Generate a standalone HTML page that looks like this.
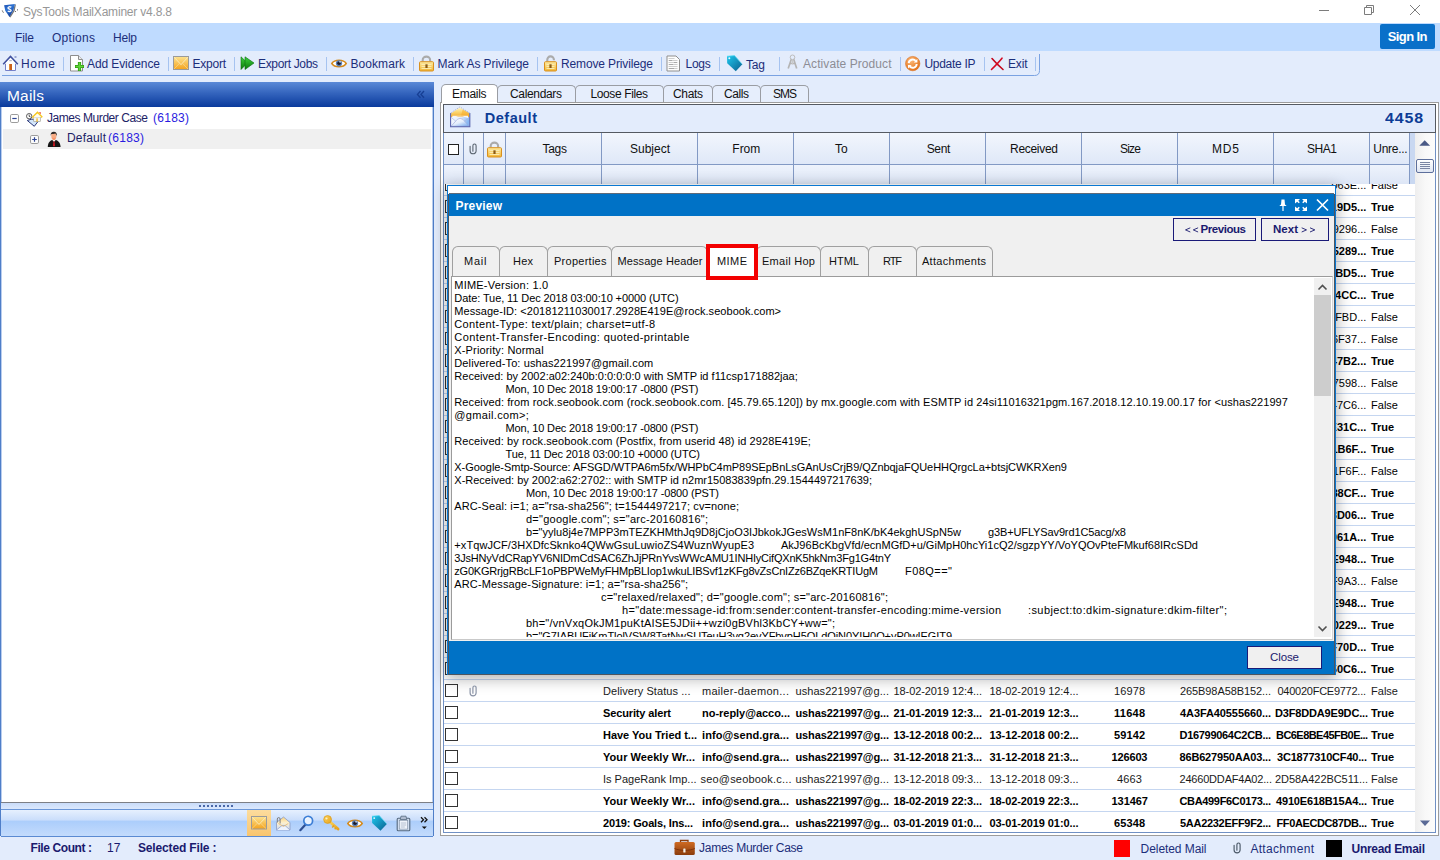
<!DOCTYPE html>
<html><head><meta charset="utf-8"><title>SysTools MailXaminer v4.8.8</title>
<style>

*{margin:0;padding:0;box-sizing:border-box}
html,body{width:1440px;height:860px;overflow:hidden;background:#e3ecfc;font-family:"Liberation Sans",sans-serif;}
.a{position:absolute}
.t{position:absolute;white-space:pre;font-family:"Liberation Sans",sans-serif;}
svg{position:absolute;overflow:visible}
.sep{position:absolute;top:56.5px;width:1px;height:14px;background:#a6c3f0}
.tab{position:absolute;border:1px solid #9a9da3;border-bottom:none;border-radius:5px 5px 0 0;background:#e6eefc}
.ptab{position:absolute;top:246px;height:31px;border:1px solid #a0a0a0;border-bottom:none;border-radius:6px 6px 0 0;background:#f0f0f0}
.hl{position:absolute;left:444px;width:971px;height:1px;background:#c5d6f0}
.cb{position:absolute;left:445px;width:13px;height:13px;border:1px solid #333;background:#fff}
.vl{position:absolute;top:133px;width:1px;height:51px;background:#8299c4}

</style></head><body>
<div class="a" style="left:0;top:0;width:1440px;height:23px;background:#fff"></div><span class="t" style="left:23.0px;top:3.5px;font-size:12px;line-height:16px;color:#979797;letter-spacing:-0.195px;">SysTools MailXaminer v4.8.8</span><svg style="left:1300px;top:0" width="140" height="23"><path d="M19 10.500h10" stroke="#7c7c7c" fill="none"/><path d="M64.500 7.500h7v7h-7z M66.500 7.500v-2h7v7h-2" stroke="#7c7c7c" fill="none"/><path d="M110 5l10 10M120 5l-10 10" stroke="#6e6e6e" stroke-width=".9" fill="none"/></svg><div class="a" style="left:0;top:23px;width:1440px;height:28px;background:#bfdbff"></div><span class="t" style="left:15.0px;top:29.8px;font-size:12px;line-height:16px;color:#1c2e7a;letter-spacing:-0.115px;">File</span><span class="t" style="left:52.0px;top:29.8px;font-size:12px;line-height:16px;color:#1c2e7a;letter-spacing:0.273px;">Options</span><span class="t" style="left:113.0px;top:29.8px;font-size:12px;line-height:16px;color:#1c2e7a;letter-spacing:-0.229px;">Help</span><div class="a" style="left:1380px;top:24px;width:55px;height:25px;background:#0a70c9;border-radius:2px"></div><span class="t" style="left:1387.7px;top:28.2px;font-size:13px;line-height:17px;color:#fff;font-weight:bold;letter-spacing:-0.591px;">Sign In</span><svg style="left:0;top:51px" width="1045" height="28"><path d="M2 24.500H1034.500Q1039.500 24.500 1039.500 19.500V3" fill="none" stroke="#7aa2e2" stroke-width="1"/></svg><div class="sep" style="left:63px"></div><div class="sep" style="left:168px"></div><div class="sep" style="left:234px"></div><div class="sep" style="left:326px"></div><div class="sep" style="left:413px"></div><div class="sep" style="left:537px"></div><div class="sep" style="left:661px"></div><div class="sep" style="left:719px"></div><div class="sep" style="left:779px"></div><div class="sep" style="left:900px"></div><div class="sep" style="left:984px"></div><div class="sep" style="left:1035px"></div><span class="t" style="left:21.0px;top:55.5px;font-size:12px;line-height:16px;color:#1c2e7a;letter-spacing:0.661px;">Home</span><span class="t" style="left:87.0px;top:55.5px;font-size:12px;line-height:16px;color:#1c2e7a;letter-spacing:-0.097px;">Add Evidence</span><span class="t" style="left:192.5px;top:55.5px;font-size:12px;line-height:16px;color:#1c2e7a;letter-spacing:-0.237px;">Export</span><span class="t" style="left:258.0px;top:55.5px;font-size:12px;line-height:16px;color:#1c2e7a;letter-spacing:-0.338px;">Export Jobs</span><span class="t" style="left:350.5px;top:55.5px;font-size:12px;line-height:16px;color:#1c2e7a;letter-spacing:0.067px;">Bookmark</span><span class="t" style="left:437.5px;top:55.5px;font-size:12px;line-height:16px;color:#1c2e7a;letter-spacing:-0.075px;">Mark As Privilege</span><span class="t" style="left:561.0px;top:55.5px;font-size:12px;line-height:16px;color:#1c2e7a;letter-spacing:-0.136px;">Remove Privilege</span><span class="t" style="left:685.5px;top:55.5px;font-size:12px;line-height:16px;color:#1c2e7a;letter-spacing:-0.277px;">Logs</span><span class="t" style="left:746.0px;top:56.5px;font-size:12px;line-height:16px;color:#1c2e7a;letter-spacing:-0.180px;">Tag</span><span class="t" style="left:924.5px;top:55.5px;font-size:12px;line-height:16px;color:#1c2e7a;letter-spacing:-0.297px;">Update IP</span><span class="t" style="left:1008.0px;top:55.5px;font-size:12px;line-height:16px;color:#1c2e7a;letter-spacing:-0.172px;">Exit</span><span class="t" style="left:803.0px;top:55.5px;font-size:12px;line-height:16px;color:#8d8d95;letter-spacing:0.075px;">Activate Product</span><div class="a" style="left:0;top:82px;width:434px;height:754px;background:#fff;border-left:1px solid #4f7ec8;border-right:1px solid #4f7ec8;box-shadow:inset 1px 0 0 #b9cdee,inset -1px 0 0 #b9cdee"></div><div class="a" style="left:0;top:82px;width:434px;height:25px;background:linear-gradient(#5a89d7,#3464bd 45%,#0a3a9c)"></div><span class="t" style="left:7.0px;top:86.0px;font-size:15.5px;line-height:19.5px;color:#fff;letter-spacing:0.207px;">Mails</span><svg style="left:416px;top:90px" width="10" height="9"><path d="M4.500 1L1.500 4.400 4.500 7.800M8 1L5 4.400 8 7.800" stroke="#173f94" stroke-width="1.400" fill="none"/></svg><div class="a" style="left:3px;top:129px;width:428px;height:20px;background:#f0f0f0"></div><svg style="left:9px;top:113px" width="12" height="12"><rect x="1.500" y="1.500" width="8" height="8" rx="1.300" fill="#fff" stroke="#9c9c9c"/><path d="M3.300 5.500h4.400" stroke="#2c4494" stroke-width="1.200"/></svg><svg style="left:29px;top:134px" width="12" height="12"><rect x="1.500" y="1.500" width="8" height="8" rx="1.300" fill="#fcfcfc" stroke="#9c9c9c"/><path d="M3.200 5.500h4.600M5.500 3.200v4.600" stroke="#2c4494" stroke-width="1.200"/></svg><span class="t" style="left:47.0px;top:110.0px;font-size:12px;line-height:16px;color:#1c2266;letter-spacing:-0.440px;">James Murder Case</span><span class="t" style="left:153.0px;top:110.0px;font-size:12px;line-height:16px;color:#2a1be0;letter-spacing:0.263px;">(6183)</span><span class="t" style="left:67.0px;top:130.0px;font-size:12px;line-height:16px;color:#1c2266;letter-spacing:0.161px;">Default</span><span class="t" style="left:108.0px;top:130.0px;font-size:12px;line-height:16px;color:#2a1be0;letter-spacing:0.263px;">(6183)</span><div class="a" style="left:1px;top:802px;width:432px;height:7px;background:linear-gradient(#c9dcfa,#dbe8fd);border-top:1px solid #7c7f86"></div><div class="a" style="left:199px;top:805px;width:35px;height:2px;background:repeating-linear-gradient(90deg,#4a68a8 0 2px,transparent 2px 4px)"></div><div class="a" style="left:1px;top:808.500px;width:432px;height:28.500px;background:linear-gradient(#e6f0fe 0,#c9ddfb 40%,#abcdfb 41%,#c3dbfc 100%);border-top:1px solid #6a96d8;border-bottom:1px solid #5a8ad2"></div><div class="a" style="left:247px;top:810px;width:24px;height:26px;background:linear-gradient(#fcdc9e,#f9c56e)"></div><span class="t" style="left:30.5px;top:840.0px;font-size:12px;line-height:16px;color:#1a1a6e;font-weight:bold;letter-spacing:-0.409px;">File Count :</span><span class="t" style="left:107.0px;top:840.0px;font-size:12px;line-height:16px;color:#1a1a6e;">17</span><span class="t" style="left:138.0px;top:840.0px;font-size:12px;line-height:16px;color:#1a1a6e;font-weight:bold;letter-spacing:-0.157px;">Selected File :</span><span class="t" style="left:699.0px;top:840.0px;font-size:12px;line-height:16px;color:#1c2e7a;letter-spacing:-0.253px;">James Murder Case</span><div class="a" style="left:1114px;top:840px;width:16px;height:17px;background:#f00"></div><span class="t" style="left:1140.6px;top:840.9px;font-size:12px;line-height:16px;color:#1c2e7a;letter-spacing:-0.073px;">Deleted Mail</span><span class="t" style="left:1250.4px;top:840.9px;font-size:12px;line-height:16px;color:#1c2e7a;letter-spacing:0.322px;">Attachment</span><div class="a" style="left:1326px;top:840px;width:16px;height:17px;background:#000"></div><span class="t" style="left:1351.5px;top:840.9px;font-size:12px;line-height:16px;color:#1a1a6e;font-weight:bold;letter-spacing:-0.291px;">Unread Email</span><div class="tab" style="left:760px;top:85px;width:49px;height:18px;background:#e6eefc"></div><div class="tab" style="left:712px;top:85px;width:49px;height:18px;background:#e6eefc"></div><div class="tab" style="left:663px;top:85px;width:50px;height:18px;background:#e6eefc"></div><div class="tab" style="left:575px;top:85px;width:89px;height:18px;background:#e6eefc"></div><div class="tab" style="left:497px;top:85px;width:79px;height:18px;background:#e6eefc"></div><div class="tab" style="left:441px;top:84px;width:57px;height:20px;background:#fff"></div><div class="a" style="left:440px;top:102px;width:999px;height:734px;border:1px solid #9c9c9c;background:#fff"></div><div class="a" style="left:443px;top:104px;width:993px;height:29px;border:1px solid #555a62;background:#e3ecfc"></div><div class="a" style="left:442px;top:100px;width:55px;height:4px;background:#fff"></div><span class="t" style="left:452.0px;top:86.0px;font-size:12px;line-height:16px;color:#111;letter-spacing:-0.303px;">Emails</span><span class="t" style="left:510.0px;top:86.0px;font-size:12px;line-height:16px;color:#111;letter-spacing:-0.338px;">Calendars</span><span class="t" style="left:590.5px;top:86.0px;font-size:12px;line-height:16px;color:#111;letter-spacing:-0.388px;">Loose Files</span><span class="t" style="left:673.0px;top:86.0px;font-size:12px;line-height:16px;color:#111;letter-spacing:-0.340px;">Chats</span><span class="t" style="left:724.0px;top:86.0px;font-size:12px;line-height:16px;color:#111;letter-spacing:-0.418px;">Calls</span><span class="t" style="left:773.0px;top:86.0px;font-size:12px;line-height:16px;color:#111;letter-spacing:-1.008px;">SMS</span><span class="t" style="left:484.8px;top:108.8px;font-size:14.5px;line-height:18.5px;color:#0c3c96;font-weight:bold;letter-spacing:0.507px;">Default</span><span class="t" style="left:1385.0px;top:109.2px;font-size:14px;line-height:18px;color:#0c3c96;font-weight:bold;letter-spacing:0.767px;transform:scaleX(1.14);transform-origin:0 50%;">4458</span><div class="a" style="left:443px;top:133px;width:993px;height:700px;background:#fff;border:1px solid #7090c4;border-top:none"></div><div class="a" style="left:444px;top:133px;width:971px;height:32px;background:linear-gradient(#f2f6fd,#dfe8f8);border-bottom:1px solid #8299c4"></div><div class="a" style="left:444px;top:165px;width:971px;height:19px;background:linear-gradient(#eef3fc,#dde6f6)"></div><div class="a" style="left:1410px;top:133px;width:5px;height:51px;background:#c9d8f1"></div><div class="vl" style="left:463px"></div><div class="vl" style="left:483px"></div><div class="vl" style="left:505px"></div><div class="vl" style="left:601px"></div><div class="vl" style="left:697px"></div><div class="vl" style="left:793px"></div><div class="vl" style="left:889px"></div><div class="vl" style="left:985px"></div><div class="vl" style="left:1081px"></div><div class="vl" style="left:1177px"></div><div class="vl" style="left:1273px"></div><div class="vl" style="left:1369px"></div><div class="vl" style="left:1409px"></div><span class="t" style="left:542.5px;top:140.5px;font-size:12px;line-height:16px;color:#111;letter-spacing:-0.286px;">Tags</span><span class="t" style="left:630.0px;top:140.5px;font-size:12px;line-height:16px;color:#111;letter-spacing:-0.005px;">Subject</span><span class="t" style="left:732.3px;top:140.5px;font-size:12px;line-height:16px;color:#111;letter-spacing:0.000px;">From</span><span class="t" style="left:835.0px;top:140.5px;font-size:12px;line-height:16px;color:#111;">To</span><span class="t" style="left:926.7px;top:140.5px;font-size:12px;line-height:16px;color:#111;letter-spacing:-0.363px;">Sent</span><span class="t" style="left:1010.0px;top:140.5px;font-size:12px;line-height:16px;color:#111;letter-spacing:-0.290px;">Received</span><span class="t" style="left:1120.0px;top:140.5px;font-size:12px;line-height:16px;color:#111;letter-spacing:-0.781px;">Size</span><span class="t" style="left:1212.0px;top:140.5px;font-size:12px;line-height:16px;color:#111;letter-spacing:0.828px;">MD5</span><span class="t" style="left:1307.0px;top:140.5px;font-size:12px;line-height:16px;color:#111;letter-spacing:-0.453px;">SHA1</span><span class="t" style="left:1373.3px;top:140.5px;font-size:12px;line-height:16px;color:#111;letter-spacing:-0.269px;">Unre...</span><div class="a" style="left:448px;top:144px;width:10.500px;height:10.500px;border:1px solid #222;background:#fff"></div><div class="a" style="left:0;top:184px;width:1440px;height:648px;overflow:hidden"><div class="a" style="left:0;top:-184px;width:1440px;height:860px"><div class="hl" style="top:195px"></div><div class="cb" style="top:178px;width:2px;border-right:none"></div><span class="t" style="left:1331.4px;top:177.6px;font-size:11px;line-height:15px;color:#000;">063E...</span><span class="t" style="left:1371.0px;top:177.6px;font-size:11px;line-height:15px;color:#000;letter-spacing:0.023px;">False</span><div class="hl" style="top:217px"></div><div class="cb" style="top:200px"></div><span class="t" style="left:1330.8px;top:199.6px;font-size:11px;line-height:15px;color:#000;font-weight:bold;">19D5...</span><span class="t" style="left:1371.0px;top:199.6px;font-size:11px;line-height:15px;color:#000;font-weight:bold;letter-spacing:-0.078px;">True</span><div class="hl" style="top:239px"></div><div class="cb" style="top:222px"></div><span class="t" style="left:1332.7px;top:221.6px;font-size:11px;line-height:15px;color:#000;">9296...</span><span class="t" style="left:1371.0px;top:221.6px;font-size:11px;line-height:15px;color:#000;letter-spacing:0.023px;">False</span><div class="hl" style="top:261px"></div><div class="cb" style="top:244px"></div><span class="t" style="left:1332.7px;top:243.6px;font-size:11px;line-height:15px;color:#000;font-weight:bold;">5289...</span><span class="t" style="left:1371.0px;top:243.6px;font-size:11px;line-height:15px;color:#000;font-weight:bold;letter-spacing:-0.078px;">True</span><div class="hl" style="top:283px"></div><div class="cb" style="top:266px"></div><span class="t" style="left:1327.8px;top:265.6px;font-size:11px;line-height:15px;color:#000;font-weight:bold;">EBD5...</span><span class="t" style="left:1371.0px;top:265.6px;font-size:11px;line-height:15px;color:#000;font-weight:bold;letter-spacing:-0.078px;">True</span><div class="hl" style="top:305px"></div><div class="cb" style="top:288px"></div><span class="t" style="left:1329.0px;top:287.6px;font-size:11px;line-height:15px;color:#000;font-weight:bold;">04CC...</span><span class="t" style="left:1371.0px;top:287.6px;font-size:11px;line-height:15px;color:#000;font-weight:bold;letter-spacing:-0.078px;">True</span><div class="hl" style="top:327px"></div><div class="cb" style="top:310px"></div><span class="t" style="left:1327.8px;top:309.6px;font-size:11px;line-height:15px;color:#000;">EFBD...</span><span class="t" style="left:1371.0px;top:309.6px;font-size:11px;line-height:15px;color:#000;letter-spacing:0.023px;">False</span><div class="hl" style="top:349px"></div><div class="cb" style="top:332px"></div><span class="t" style="left:1332.0px;top:331.6px;font-size:11px;line-height:15px;color:#000;">6F37...</span><span class="t" style="left:1371.0px;top:331.6px;font-size:11px;line-height:15px;color:#000;letter-spacing:0.023px;">False</span><div class="hl" style="top:371px"></div><div class="cb" style="top:354px"></div><span class="t" style="left:1330.8px;top:353.6px;font-size:11px;line-height:15px;color:#000;font-weight:bold;">47B2...</span><span class="t" style="left:1371.0px;top:353.6px;font-size:11px;line-height:15px;color:#000;font-weight:bold;letter-spacing:-0.078px;">True</span><div class="hl" style="top:393px"></div><div class="cb" style="top:376px"></div><span class="t" style="left:1332.7px;top:375.6px;font-size:11px;line-height:15px;color:#000;">7598...</span><span class="t" style="left:1371.0px;top:375.6px;font-size:11px;line-height:15px;color:#000;letter-spacing:0.023px;">False</span><div class="hl" style="top:415px"></div><div class="cb" style="top:398px"></div><span class="t" style="left:1330.8px;top:397.6px;font-size:11px;line-height:15px;color:#000;">47C6...</span><span class="t" style="left:1371.0px;top:397.6px;font-size:11px;line-height:15px;color:#000;letter-spacing:0.023px;">False</span><div class="hl" style="top:437px"></div><div class="cb" style="top:420px"></div><span class="t" style="left:1329.6px;top:419.6px;font-size:11px;line-height:15px;color:#000;font-weight:bold;">E31C...</span><span class="t" style="left:1371.0px;top:419.6px;font-size:11px;line-height:15px;color:#000;font-weight:bold;letter-spacing:-0.078px;">True</span><div class="hl" style="top:459px"></div><div class="cb" style="top:442px"></div><span class="t" style="left:1331.4px;top:441.6px;font-size:11px;line-height:15px;color:#000;font-weight:bold;">1B6F...</span><span class="t" style="left:1371.0px;top:441.6px;font-size:11px;line-height:15px;color:#000;font-weight:bold;letter-spacing:-0.078px;">True</span><div class="hl" style="top:481px"></div><div class="cb" style="top:464px"></div><span class="t" style="left:1332.7px;top:463.6px;font-size:11px;line-height:15px;color:#000;">1F6F...</span><span class="t" style="left:1371.0px;top:463.6px;font-size:11px;line-height:15px;color:#000;letter-spacing:0.023px;">False</span><div class="hl" style="top:503px"></div><div class="cb" style="top:486px"></div><span class="t" style="left:1331.4px;top:485.6px;font-size:11px;line-height:15px;color:#000;font-weight:bold;">88CF...</span><span class="t" style="left:1371.0px;top:485.6px;font-size:11px;line-height:15px;color:#000;font-weight:bold;letter-spacing:-0.078px;">True</span><div class="hl" style="top:525px"></div><div class="cb" style="top:508px"></div><span class="t" style="left:1330.8px;top:507.6px;font-size:11px;line-height:15px;color:#000;font-weight:bold;">3D06...</span><span class="t" style="left:1371.0px;top:507.6px;font-size:11px;line-height:15px;color:#000;font-weight:bold;letter-spacing:-0.078px;">True</span><div class="hl" style="top:547px"></div><div class="cb" style="top:530px"></div><span class="t" style="left:1330.8px;top:529.6px;font-size:11px;line-height:15px;color:#000;font-weight:bold;">061A...</span><span class="t" style="left:1371.0px;top:529.6px;font-size:11px;line-height:15px;color:#000;font-weight:bold;letter-spacing:-0.078px;">True</span><div class="hl" style="top:569px"></div><div class="cb" style="top:552px"></div><span class="t" style="left:1331.4px;top:551.6px;font-size:11px;line-height:15px;color:#000;font-weight:bold;">E948...</span><span class="t" style="left:1371.0px;top:551.6px;font-size:11px;line-height:15px;color:#000;font-weight:bold;letter-spacing:-0.078px;">True</span><div class="hl" style="top:591px"></div><div class="cb" style="top:574px"></div><span class="t" style="left:1330.8px;top:573.6px;font-size:11px;line-height:15px;color:#000;">F9A3...</span><span class="t" style="left:1371.0px;top:573.6px;font-size:11px;line-height:15px;color:#000;letter-spacing:0.023px;">False</span><div class="hl" style="top:613px"></div><div class="cb" style="top:596px"></div><span class="t" style="left:1331.4px;top:595.6px;font-size:11px;line-height:15px;color:#000;font-weight:bold;">E948...</span><span class="t" style="left:1371.0px;top:595.6px;font-size:11px;line-height:15px;color:#000;font-weight:bold;letter-spacing:-0.078px;">True</span><div class="hl" style="top:635px"></div><div class="cb" style="top:618px"></div><span class="t" style="left:1332.7px;top:617.6px;font-size:11px;line-height:15px;color:#000;font-weight:bold;">0229...</span><span class="t" style="left:1371.0px;top:617.6px;font-size:11px;line-height:15px;color:#000;font-weight:bold;letter-spacing:-0.078px;">True</span><div class="hl" style="top:657px"></div><div class="cb" style="top:640px"></div><span class="t" style="left:1330.2px;top:639.6px;font-size:11px;line-height:15px;color:#000;font-weight:bold;">F70D...</span><span class="t" style="left:1371.0px;top:639.6px;font-size:11px;line-height:15px;color:#000;font-weight:bold;letter-spacing:-0.078px;">True</span><div class="hl" style="top:679px"></div><div class="cb" style="top:662px"></div><span class="t" style="left:1330.8px;top:661.6px;font-size:11px;line-height:15px;color:#000;font-weight:bold;">50C6...</span><span class="t" style="left:1371.0px;top:661.6px;font-size:11px;line-height:15px;color:#000;font-weight:bold;letter-spacing:-0.078px;">True</span><div class="hl" style="top:701px"></div><div class="cb" style="top:684px"></div><span class="t" style="left:603.0px;top:683.6px;font-size:11px;line-height:15px;color:#1a1a1a;letter-spacing:0.072px;">Delivery Status ...</span><span class="t" style="left:702.0px;top:683.6px;font-size:11px;line-height:15px;color:#1a1a1a;letter-spacing:0.297px;">mailer-daemon...</span><span class="t" style="left:795.5px;top:683.6px;font-size:11px;line-height:15px;color:#1a1a1a;letter-spacing:0.066px;">ushas221997@g...</span><span class="t" style="left:893.5px;top:683.6px;font-size:11px;line-height:15px;color:#1a1a1a;letter-spacing:-0.083px;">18-02-2019 12:4...</span><span class="t" style="left:989.5px;top:683.6px;font-size:11px;line-height:15px;color:#1a1a1a;letter-spacing:-0.053px;">18-02-2019 12:4...</span><span class="t" style="left:1114.0px;top:683.6px;font-size:11px;line-height:15px;color:#1a1a1a;letter-spacing:0.102px;">16978</span><span class="t" style="left:1180.0px;top:683.6px;font-size:11px;line-height:15px;color:#1a1a1a;letter-spacing:-0.091px;">265B98A58B152...</span><span class="t" style="left:1277.5px;top:683.6px;font-size:11px;line-height:15px;color:#1a1a1a;letter-spacing:-0.257px;">040020FCE9772...</span><span class="t" style="left:1371.0px;top:683.6px;font-size:11px;line-height:15px;color:#1a1a1a;letter-spacing:0.023px;">False</span><div class="hl" style="top:723px"></div><div class="cb" style="top:706px"></div><span class="t" style="left:603.0px;top:705.6px;font-size:11px;line-height:15px;color:#000;font-weight:bold;letter-spacing:-0.131px;">Security alert</span><span class="t" style="left:702.0px;top:705.6px;font-size:11px;line-height:15px;color:#000;font-weight:bold;letter-spacing:-0.025px;">no-reply@acco...</span><span class="t" style="left:795.5px;top:705.6px;font-size:11px;line-height:15px;color:#000;font-weight:bold;letter-spacing:-0.108px;">ushas221997@g...</span><span class="t" style="left:893.5px;top:705.6px;font-size:11px;line-height:15px;color:#000;font-weight:bold;letter-spacing:-0.119px;">21-01-2019 12:3...</span><span class="t" style="left:989.5px;top:705.6px;font-size:11px;line-height:15px;color:#000;font-weight:bold;letter-spacing:-0.089px;">21-01-2019 12:3...</span><span class="t" style="left:1114.0px;top:705.6px;font-size:11px;line-height:15px;color:#000;font-weight:bold;letter-spacing:0.254px;">11648</span><span class="t" style="left:1180.0px;top:705.6px;font-size:11px;line-height:15px;color:#000;font-weight:bold;letter-spacing:-0.091px;">4A3FA40555660...</span><span class="t" style="left:1275.0px;top:705.6px;font-size:11px;line-height:15px;color:#000;font-weight:bold;letter-spacing:-0.169px;">D3F8DDA9E9DC...</span><span class="t" style="left:1371.0px;top:705.6px;font-size:11px;line-height:15px;color:#000;font-weight:bold;letter-spacing:-0.078px;">True</span><div class="hl" style="top:745px"></div><div class="cb" style="top:728px"></div><span class="t" style="left:603.0px;top:727.6px;font-size:11px;line-height:15px;color:#000;font-weight:bold;letter-spacing:-0.019px;">Have You Tried t...</span><span class="t" style="left:702.0px;top:727.6px;font-size:11px;line-height:15px;color:#000;font-weight:bold;letter-spacing:0.073px;">info@send.gra...</span><span class="t" style="left:795.5px;top:727.6px;font-size:11px;line-height:15px;color:#000;font-weight:bold;letter-spacing:-0.108px;">ushas221997@g...</span><span class="t" style="left:893.5px;top:727.6px;font-size:11px;line-height:15px;color:#000;font-weight:bold;letter-spacing:-0.119px;">13-12-2018 00:2...</span><span class="t" style="left:989.5px;top:727.6px;font-size:11px;line-height:15px;color:#000;font-weight:bold;letter-spacing:-0.089px;">13-12-2018 00:2...</span><span class="t" style="left:1114.0px;top:727.6px;font-size:11px;line-height:15px;color:#000;font-weight:bold;letter-spacing:0.102px;">59142</span><span class="t" style="left:1179.5px;top:727.6px;font-size:11px;line-height:15px;color:#000;font-weight:bold;letter-spacing:-0.301px;">D16799064C2CB...</span><span class="t" style="left:1276.0px;top:727.6px;font-size:11px;line-height:15px;color:#000;font-weight:bold;letter-spacing:-0.551px;">BC6E8BE45FB0E...</span><span class="t" style="left:1371.0px;top:727.6px;font-size:11px;line-height:15px;color:#000;font-weight:bold;letter-spacing:-0.078px;">True</span><div class="hl" style="top:767px"></div><div class="cb" style="top:750px"></div><span class="t" style="left:603.0px;top:749.6px;font-size:11px;line-height:15px;color:#000;font-weight:bold;letter-spacing:0.057px;">Your Weekly Wr...</span><span class="t" style="left:702.0px;top:749.6px;font-size:11px;line-height:15px;color:#000;font-weight:bold;letter-spacing:0.073px;">info@send.gra...</span><span class="t" style="left:795.5px;top:749.6px;font-size:11px;line-height:15px;color:#000;font-weight:bold;letter-spacing:-0.108px;">ushas221997@g...</span><span class="t" style="left:893.5px;top:749.6px;font-size:11px;line-height:15px;color:#000;font-weight:bold;letter-spacing:-0.119px;">31-12-2018 21:3...</span><span class="t" style="left:989.5px;top:749.6px;font-size:11px;line-height:15px;color:#000;font-weight:bold;letter-spacing:-0.089px;">31-12-2018 21:3...</span><span class="t" style="left:1111.5px;top:749.6px;font-size:11px;line-height:15px;color:#000;font-weight:bold;letter-spacing:-0.144px;">126603</span><span class="t" style="left:1179.5px;top:749.6px;font-size:11px;line-height:15px;color:#000;font-weight:bold;letter-spacing:-0.179px;">86B627950AA03...</span><span class="t" style="left:1277.0px;top:749.6px;font-size:11px;line-height:15px;color:#000;font-weight:bold;letter-spacing:-0.197px;">3C1877310CF40...</span><span class="t" style="left:1371.0px;top:749.6px;font-size:11px;line-height:15px;color:#000;font-weight:bold;letter-spacing:-0.078px;">True</span><div class="hl" style="top:789px"></div><div class="cb" style="top:772px"></div><span class="t" style="left:603.0px;top:771.6px;font-size:11px;line-height:15px;color:#1a1a1a;letter-spacing:-0.003px;">Is PageRank Imp...</span><span class="t" style="left:700.5px;top:771.6px;font-size:11px;line-height:15px;color:#1a1a1a;letter-spacing:0.185px;">seo@seobook.c...</span><span class="t" style="left:795.5px;top:771.6px;font-size:11px;line-height:15px;color:#1a1a1a;letter-spacing:0.066px;">ushas221997@g...</span><span class="t" style="left:893.5px;top:771.6px;font-size:11px;line-height:15px;color:#1a1a1a;letter-spacing:-0.083px;">13-12-2018 09:3...</span><span class="t" style="left:989.5px;top:771.6px;font-size:11px;line-height:15px;color:#1a1a1a;letter-spacing:-0.053px;">13-12-2018 09:3...</span><span class="t" style="left:1117.0px;top:771.6px;font-size:11px;line-height:15px;color:#1a1a1a;letter-spacing:0.172px;">4663</span><span class="t" style="left:1179.5px;top:771.6px;font-size:11px;line-height:15px;color:#1a1a1a;letter-spacing:-0.193px;">24660DDAF4A02...</span><span class="t" style="left:1275.0px;top:771.6px;font-size:11px;line-height:15px;color:#1a1a1a;letter-spacing:-0.066px;">2D58A422BC511...</span><span class="t" style="left:1371.0px;top:771.6px;font-size:11px;line-height:15px;color:#1a1a1a;letter-spacing:0.023px;">False</span><div class="hl" style="top:811px"></div><div class="cb" style="top:794px"></div><span class="t" style="left:603.0px;top:793.6px;font-size:11px;line-height:15px;color:#000;font-weight:bold;letter-spacing:0.057px;">Your Weekly Wr...</span><span class="t" style="left:702.0px;top:793.6px;font-size:11px;line-height:15px;color:#000;font-weight:bold;letter-spacing:0.073px;">info@send.gra...</span><span class="t" style="left:795.5px;top:793.6px;font-size:11px;line-height:15px;color:#000;font-weight:bold;letter-spacing:-0.108px;">ushas221997@g...</span><span class="t" style="left:893.5px;top:793.6px;font-size:11px;line-height:15px;color:#000;font-weight:bold;letter-spacing:-0.119px;">18-02-2019 22:3...</span><span class="t" style="left:989.5px;top:793.6px;font-size:11px;line-height:15px;color:#000;font-weight:bold;letter-spacing:-0.089px;">18-02-2019 22:3...</span><span class="t" style="left:1111.5px;top:793.6px;font-size:11px;line-height:15px;color:#000;font-weight:bold;letter-spacing:-0.044px;">131467</span><span class="t" style="left:1179.5px;top:793.6px;font-size:11px;line-height:15px;color:#000;font-weight:bold;letter-spacing:-0.341px;">CBA499F6C0173...</span><span class="t" style="left:1276.0px;top:793.6px;font-size:11px;line-height:15px;color:#000;font-weight:bold;letter-spacing:-0.172px;">4910E618B15A4...</span><span class="t" style="left:1371.0px;top:793.6px;font-size:11px;line-height:15px;color:#000;font-weight:bold;letter-spacing:-0.078px;">True</span><div class="cb" style="top:816px"></div><span class="t" style="left:603.0px;top:815.6px;font-size:11px;line-height:15px;color:#000;font-weight:bold;letter-spacing:-0.163px;">2019: Goals, Ins...</span><span class="t" style="left:702.0px;top:815.6px;font-size:11px;line-height:15px;color:#000;font-weight:bold;letter-spacing:0.073px;">info@send.gra...</span><span class="t" style="left:795.5px;top:815.6px;font-size:11px;line-height:15px;color:#000;font-weight:bold;letter-spacing:-0.108px;">ushas221997@g...</span><span class="t" style="left:893.5px;top:815.6px;font-size:11px;line-height:15px;color:#000;font-weight:bold;letter-spacing:-0.119px;">03-01-2019 01:0...</span><span class="t" style="left:989.5px;top:815.6px;font-size:11px;line-height:15px;color:#000;font-weight:bold;letter-spacing:-0.089px;">03-01-2019 01:0...</span><span class="t" style="left:1114.0px;top:815.6px;font-size:11px;line-height:15px;color:#000;font-weight:bold;letter-spacing:0.102px;">65348</span><span class="t" style="left:1180.0px;top:815.6px;font-size:11px;line-height:15px;color:#000;font-weight:bold;letter-spacing:-0.292px;">5AA2232EFF9F2...</span><span class="t" style="left:1276.5px;top:815.6px;font-size:11px;line-height:15px;color:#000;font-weight:bold;letter-spacing:-0.391px;">FF0AECDC87DB...</span><span class="t" style="left:1371.0px;top:815.6px;font-size:11px;line-height:15px;color:#000;font-weight:bold;letter-spacing:-0.078px;">True</span></div></div><div class="a" style="left:1415px;top:133px;width:20px;height:699px;background:linear-gradient(90deg,#eeeeee,#f8f8f8 50%,#fcfcfc)"></div><div class="a" style="left:1416px;top:159px;width:18px;height:14px;border:1px solid #5d6f9c;border-radius:2px;background:linear-gradient(#fff,#dfe6f3)"></div><div class="a" style="left:1420px;top:162px;width:10px;height:1px;background:#7a86a3"></div><div class="a" style="left:1420px;top:164px;width:10px;height:1px;background:#7a86a3"></div><div class="a" style="left:1420px;top:166px;width:10px;height:1px;background:#7a86a3"></div><div class="a" style="left:1420px;top:168px;width:10px;height:1px;background:#7a86a3"></div><svg style="left:1415px;top:133px" width="20" height="701"><path d="M4.300 12.700l5.400-5.400 5.400 5.400z" fill="#4a5a86"/><path d="M5 687.5l5 5.5 5-5.5z" fill="#5a6a96"/></svg><div class="a" style="left:447px;top:184.500px;width:889px;height:490.500px;box-shadow:0 3px 14px 1px rgba(0,0,0,.30);background:#0072c6"></div><div class="a" style="left:447px;top:184.500px;width:889px;height:490.500px;background:#0a78d2"></div><div class="a" style="left:448px;top:186px;width:887px;height:488.500px;background:#f0f0f0;border:1px solid #4d555f;border-top:none"></div><div class="a" style="left:448px;top:185.600px;width:887px;height:8px;background:#fff"></div><div class="a" style="left:449px;top:193px;width:885px;height:23px;background:#0072c6;border-top:1px solid #5f6a78"></div><div class="a" style="left:449px;top:641px;width:885px;height:32.700px;background:#0072c6"></div><span class="t" style="left:455.5px;top:197.6px;font-size:12px;line-height:16px;color:#fff;font-weight:bold;letter-spacing:0.188px;">Preview</span><svg style="left:1275px;top:194px" width="60" height="22"><path d="M6.5 5.5h3l.5 5 1.7 1.6h-7.4l1.7-1.6z" fill="#fff"/><path d="M8 12v5" stroke="#fff" stroke-width="1.2"/><g fill="#fff"><path d="M20 5h5l-1.7 1.7 1.5 1.5-1.1 1.1-1.5-1.5L20 9.5z"/><path d="M32 5h-5l1.7 1.7-1.5 1.5 1.1 1.1 1.5-1.5L32 9.500z"/><path d="M20 17h5l-1.700-1.700 1.500-1.500-1.100-1.100-1.500 1.500L20 12.500z"/><path d="M32 17h-5l1.700-1.700-1.500-1.500 1.100-1.100 1.500 1.500L32 12.500z"/></g><path d="M42 5.500l11 11M53 5.500l-11 11" stroke="#fff" stroke-width="1.700" fill="none"/></svg><div class="a" style="left:1173px;top:218px;width:83px;height:23px;border:1px solid #1a1a78;background:#f0f0f0"></div><div class="a" style="left:1261px;top:218px;width:68px;height:23px;border:1px solid #1a1a78;background:#f0f0f0"></div><svg style="left:1184px;top:226px" width="16" height="8"><path d="M6.300 1.800L1.500 3.900 6.300 6M14.100 1.800L9.300 3.900 14.100 6" stroke="#1a1a6e" stroke-width=".9" fill="none"/></svg><span class="t" style="left:1200.6px;top:221.6px;font-size:11.5px;line-height:15.5px;color:#1a1a6e;font-weight:bold;letter-spacing:-0.454px;">Previous</span><span class="t" style="left:1273.0px;top:221.8px;font-size:11.5px;line-height:15.5px;color:#1a1a6e;font-weight:bold;letter-spacing:0.021px;">Next</span><svg style="left:1300px;top:226.400px" width="17" height="8"><path d="M1.700 1.800L6.500 3.900 1.700 6M10 1.800L14.800 3.900 10 6" stroke="#1a1a6e" stroke-width=".9" fill="none"/></svg><div class="ptab" style="left:452px;width:48px"></div><div class="ptab" style="left:499px;width:49px"></div><div class="ptab" style="left:547px;width:65px"></div><div class="ptab" style="left:611px;width:97px"></div><div class="ptab" style="left:707px;width:50px"></div><div class="ptab" style="left:756px;width:65px"></div><div class="ptab" style="left:820px;width:49px"></div><div class="ptab" style="left:868px;width:49px"></div><div class="ptab" style="left:916px;width:77px"></div><div class="a" style="left:451px;top:276px;width:882px;height:364px;background:#fff;border:1px solid #9b9b9b;border-right-color:#d5d5d5;border-bottom-color:#c9c9c9"></div><div class="a" style="left:706px;top:244px;width:52px;height:35.700px;background:#fff;border:4px solid #f30000"></div><span class="t" style="left:464.0px;top:253.5px;font-size:11px;line-height:15px;color:#111;letter-spacing:0.776px;">Mail</span><span class="t" style="left:513.0px;top:253.5px;font-size:11px;line-height:15px;color:#111;letter-spacing:0.219px;">Hex</span><span class="t" style="left:554.0px;top:253.5px;font-size:11px;line-height:15px;color:#111;letter-spacing:0.262px;">Properties</span><span class="t" style="left:617.5px;top:253.5px;font-size:11px;line-height:15px;color:#111;letter-spacing:0.094px;">Message Header</span><span class="t" style="left:717.0px;top:253.5px;font-size:11px;line-height:15px;color:#111;letter-spacing:0.422px;">MIME</span><span class="t" style="left:762.0px;top:253.5px;font-size:11px;line-height:15px;color:#111;letter-spacing:0.281px;">Email Hop</span><span class="t" style="left:829.0px;top:253.5px;font-size:11px;line-height:15px;color:#111;letter-spacing:0.016px;">HTML</span><span class="t" style="left:883.0px;top:253.5px;font-size:11px;line-height:15px;color:#111;letter-spacing:-1.094px;">RTF</span><span class="t" style="left:922.0px;top:253.5px;font-size:11px;line-height:15px;color:#111;letter-spacing:0.286px;">Attachments</span><div class="a" style="left:1314px;top:278px;width:17px;height:359px;background:#f0f0f0"></div><div class="a" style="left:1314px;top:295px;width:17px;height:101px;background:#cdcdcd"></div><svg style="left:1314px;top:277px" width="17" height="362"><path d="M4.500 12.500l4-4 4 4" stroke="#505050" stroke-width="1.600" fill="none"/><path d="M4.500 349.500l4 4 4-4" stroke="#505050" stroke-width="1.600" fill="none"/></svg><div class="a" style="left:1247px;top:646px;width:75px;height:23px;border:1px solid #1a1a78;background:#f0f0f0"></div><span class="t" style="left:1270.0px;top:650.2px;font-size:11.5px;line-height:15.5px;color:#1a1a6e;letter-spacing:-0.102px;">Close</span><div class="a" style="left:453px;top:277px;width:861px;height:360px;overflow:hidden"><div class="a" style="left:-453px;top:-277px;width:1440px;height:860px"><span class="t" style="left:454.3px;top:279.0px;font-size:11px;line-height:13px;color:#000;letter-spacing:0.213px;">MIME-Version: 1.0</span><span class="t" style="left:454.3px;top:292.0px;font-size:11px;line-height:13px;color:#000;letter-spacing:-0.093px;">Date: Tue, 11 Dec 2018 03:00:10 +0000 (UTC)</span><span class="t" style="left:454.3px;top:305.0px;font-size:11px;line-height:13px;color:#000;letter-spacing:0.049px;">Message-ID: &lt;20181211030017.2928E419E@rock.seobook.com&gt;</span><span class="t" style="left:454.3px;top:318.0px;font-size:11px;line-height:13px;color:#000;letter-spacing:0.369px;">Content-Type: text/plain; charset=utf-8</span><span class="t" style="left:454.3px;top:331.0px;font-size:11px;line-height:13px;color:#000;letter-spacing:0.407px;">Content-Transfer-Encoding: quoted-printable</span><span class="t" style="left:454.3px;top:344.0px;font-size:11px;line-height:13px;color:#000;letter-spacing:0.147px;">X-Priority: Normal</span><span class="t" style="left:454.3px;top:357.0px;font-size:11px;line-height:13px;color:#000;letter-spacing:0.111px;">Delivered-To: ushas221997@gmail.com</span><span class="t" style="left:454.3px;top:370.0px;font-size:11px;line-height:13px;color:#000;letter-spacing:0.013px;">Received: by 2002:a02:240b:0:0:0:0:0 with SMTP id f11csp171882jaa;</span><span class="t" style="left:505.6px;top:383.0px;font-size:11px;line-height:13px;color:#000;letter-spacing:-0.162px;">Mon, 10 Dec 2018 19:00:17 -0800 (PST)</span><span class="t" style="left:454.3px;top:396.0px;font-size:11px;line-height:13px;color:#000;letter-spacing:0.094px;">Received: from rock.seobook.com (rock.seobook.com. [45.79.65.120]) by mx.google.com with ESMTP id 24si11016321pgm.167.2018.12.10.19.00.17 for &lt;ushas221997</span><span class="t" style="left:454.3px;top:409.0px;font-size:11px;line-height:13px;color:#000;letter-spacing:0.347px;">@gmail.com&gt;;</span><span class="t" style="left:505.6px;top:422.0px;font-size:11px;line-height:13px;color:#000;letter-spacing:-0.162px;">Mon, 10 Dec 2018 19:00:17 -0800 (PST)</span><span class="t" style="left:454.3px;top:435.0px;font-size:11px;line-height:13px;color:#000;letter-spacing:0.083px;">Received: by rock.seobook.com (Postfix, from userid 48) id 2928E419E;</span><span class="t" style="left:505.6px;top:448.0px;font-size:11px;line-height:13px;color:#000;letter-spacing:-0.129px;">Tue, 11 Dec 2018 03:00:10 +0000 (UTC)</span><span class="t" style="left:454.3px;top:461.0px;font-size:11px;line-height:13px;color:#000;letter-spacing:-0.050px;">X-Google-Smtp-Source: AFSGD/WTPA6m5fx/WHPbC4mP89SEpBnLsGAnUsCrjB9/QZnbqjaFQUeHHQrgcLa+btsjCWKRXen9</span><span class="t" style="left:454.3px;top:474.0px;font-size:11px;line-height:13px;color:#000;letter-spacing:-0.005px;">X-Received: by 2002:a62:2702:: with SMTP id n2mr15083839pfn.29.1544497217639;</span><span class="t" style="left:526.0px;top:487.0px;font-size:11px;line-height:13px;color:#000;letter-spacing:-0.159px;">Mon, 10 Dec 2018 19:00:17 -0800 (PST)</span><span class="t" style="left:454.3px;top:500.0px;font-size:11px;line-height:13px;color:#000;letter-spacing:0.103px;">ARC-Seal: i=1; a="rsa-sha256"; t=1544497217; cv=none;</span><span class="t" style="left:526.0px;top:513.0px;font-size:11px;line-height:13px;color:#000;letter-spacing:0.250px;">d="google.com"; s="arc-20160816";</span><span class="t" style="left:526.0px;top:526.0px;font-size:11px;line-height:13px;color:#000;letter-spacing:0.033px;">b="yylu8j4e7MPP3mTEZKHMthJq9D8jCjoO3IJbkokJGesWsM1nF8nK/bK4ekghUSpN5w</span><span class="t" style="left:988.0px;top:526.0px;font-size:11px;line-height:13px;color:#000;letter-spacing:-0.125px;">g3B+UFLYSav9rd1C5acg/x8</span><span class="t" style="left:454.3px;top:539.0px;font-size:11px;line-height:13px;color:#000;letter-spacing:0.087px;">+xTqwJCF/3HXDfcSknko4QWwGsuLuwioZS4WuznWyupE3</span><span class="t" style="left:781.0px;top:539.0px;font-size:11px;line-height:13px;color:#000;letter-spacing:0.011px;">AkJ96BcKbgVfd/ecnMGfD+u/GiMpH0hcYi1cQ2/sgzpYY/VoYQOvPteFMkuf68IRcSDd</span><span class="t" style="left:454.3px;top:552.0px;font-size:11px;line-height:13px;color:#000;letter-spacing:-0.197px;">3JsHNyVdCRapYV6NIDmCdSAC6ZhJjPRnYvsWWcAMU1INHIyCifQXnK5hkNm3Fg1G4tnY</span><span class="t" style="left:454.3px;top:565.0px;font-size:11px;line-height:13px;color:#000;letter-spacing:-0.203px;">zG0KGRrjgRBcLF1oPBPWeMyFHMpBLIop1wkuLIBSvf1zKFg8vZsCnIZz6BZqeKRTIUgM</span><span class="t" style="left:905.0px;top:565.0px;font-size:11px;line-height:13px;color:#000;letter-spacing:0.456px;">F08Q=="</span><span class="t" style="left:454.3px;top:578.0px;font-size:11px;line-height:13px;color:#000;letter-spacing:0.137px;">ARC-Message-Signature: i=1; a="rsa-sha256";</span><span class="t" style="left:601.0px;top:591.0px;font-size:11px;line-height:13px;color:#000;letter-spacing:0.225px;">c="relaxed/relaxed"; d="google.com"; s="arc-20160816";</span><span class="t" style="left:622.0px;top:604.0px;font-size:11px;line-height:13px;color:#000;letter-spacing:0.324px;">h="date:message-id:from:sender:content-transfer-encoding:mime-version</span><span class="t" style="left:1028.0px;top:604.0px;font-size:11px;line-height:13px;color:#000;letter-spacing:0.409px;">:subject:to:dkim-signature:dkim-filter";</span><span class="t" style="left:526.0px;top:617.0px;font-size:11px;line-height:13px;color:#000;letter-spacing:0.226px;">bh="/vnVxqOkJM1puKtAISE5JDii++wzi0gBVhl3KbCY+ww=";</span><span class="t" style="left:526.0px;top:630.0px;font-size:11px;line-height:13px;color:#000;letter-spacing:-0.078px;">b="G7IABUFiKmTlolVSW8TatNwSUTeuH3vq2evYFbvpH5OLdOiN0YIH0Q+yP0wIEGIT9</span></div></div><svg width="0" height="0" style="left:0;top:0"><defs><linearGradient id="gEnv" x1="0" y1="0" x2="0" y2="1"><stop offset="0" stop-color="#fde391"/><stop offset="1" stop-color="#f4a21c"/></linearGradient><linearGradient id="gLock" x1="0" y1="0" x2="0" y2="1"><stop offset="0" stop-color="#fdeaa0"/><stop offset="1" stop-color="#f2b534"/></linearGradient><linearGradient id="gTag" x1="0" y1="0" x2="1" y2="1"><stop offset="0" stop-color="#1fc8ee"/><stop offset="1" stop-color="#0a5f8e"/></linearGradient><linearGradient id="gGrn" x1="0" y1="0" x2="0" y2="1"><stop offset="0" stop-color="#3fd23f"/><stop offset="1" stop-color="#0a7a0a"/></linearGradient><radialGradient id="gOr" cx=".4" cy=".3" r=".8"><stop offset="0" stop-color="#fbb877"/><stop offset="1" stop-color="#df6a10"/></radialGradient><linearGradient id="gBag" x1="0" y1="0" x2="0" y2="1"><stop offset="0" stop-color="#cf6a22"/><stop offset="1" stop-color="#8a3c0c"/></linearGradient><linearGradient id="gKey" x1="0" y1="0" x2="1" y2="1"><stop offset="0" stop-color="#fbd35c"/><stop offset="1" stop-color="#e8a31e"/></linearGradient><linearGradient id="gFlap" x1="0" y1="0" x2="0" y2="1"><stop offset="0" stop-color="#fff7c8"/><stop offset=".45" stop-color="#fbd877"/><stop offset="1" stop-color="#f5ad2c"/></linearGradient><linearGradient id="gFold" x1="0" y1="0" x2=".8" y2="1"><stop offset="0" stop-color="#ffffff"/><stop offset=".55" stop-color="#e4eefc"/><stop offset="1" stop-color="#7fb0f0"/></linearGradient><linearGradient id="gBody" x1="0" y1="0" x2="1" y2=".6"><stop offset="0" stop-color="#ffffff"/><stop offset=".6" stop-color="#e6effc"/><stop offset="1" stop-color="#86b6f2"/></linearGradient><linearGradient id="gLogo" x1="0" y1="0" x2=".6" y2="1"><stop offset="0" stop-color="#1a4cae"/><stop offset=".45" stop-color="#2f74d4"/><stop offset="1" stop-color="#143c96"/></linearGradient><linearGradient id="gOpen" x1="0" y1="0" x2="0" y2="1"><stop offset="0" stop-color="#fbd37a"/><stop offset=".45" stop-color="#fdf0cf"/><stop offset="1" stop-color="#c9d9f7"/></linearGradient></defs></svg><svg style="left:0px;top:0px" width="22" height="22" viewBox="0 0 22 22"><path d="M15.300 4.300L14 10.800 9.900 17.200" fill="none" stroke="#3a3a3a" stroke-width="1.300" opacity=".7"/><path d="M4.100 5.200L14.900 4.100 13.300 10.600 9.500 16.900 5.300 10.800z" fill="url(#gLogo)"/><path d="M11.300 7.200c-1.600-.9-3.400-.4-3.300.7.100 1.300 3.100 1.100 3.100 2.600 0 1.100-1.900 1.400-3.400.5" stroke="#f4f6fa" stroke-width="1.350" fill="none"/><path d="M2.200 10.300l.8 2 .7.200" stroke="#555" stroke-width=".9" fill="none" opacity=".8"/><circle cx="15.500" cy="11.500" r=".55" fill="#555"/><path d="M17.500 9.200v1.300" stroke="#666" stroke-width=".9"/></svg><svg style="left:2px;top:54px" width="18" height="18" viewBox="0 0 18 18"><path d="M3.500 9.500v7h10v-7" fill="#fff" stroke="#7480c8" stroke-width="1"/><path d="M1.200 10.300L8.500 2.500l7.300 7.800" fill="none" stroke="#3f4f9e" stroke-width="1.600"/><path d="M3 9.800L8.500 4l5.500 5.800z" fill="#fff"/><rect x="7" y="10" width="3" height="6" fill="#c9601a"/><rect x="7" y="10" width="1" height="6" fill="#e08a3a"/><rect x="12.500" y="2.500" width="2" height="1" fill="#5060b0"/><rect x="7.300" y="6" width="2.500" height="1.200" fill="#b8b8c8"/></svg><svg style="left:69px;top:54px" width="17" height="18" viewBox="0 0 17 18"><path d="M1.500 1.500h8l4 4v11.500h-12z" fill="#fff" stroke="#8e8e8e" stroke-width="1"/><path d="M9.500 1.500v4h4" fill="#ececec" stroke="#8e8e8e" stroke-width="1"/><path d="M10.500 8v9M6 12.500h9" stroke="#2f9a12" stroke-width="3.200"/><path d="M10.500 8.600v7.800M6.600 12.500h7.800" stroke="#5fd43a" stroke-width="1.700"/></svg><svg style="left:173px;top:56px" width="16" height="14" viewBox="0 0 16 14"><rect x=".5" y=".5" width="15" height="13" fill="url(#gEnv)" stroke="#9a9a9a" stroke-width="1"/><path d="M1 1l7.0 7.700000000000001 7.0 -7.700000000000001" fill="none" stroke="#fbe9b5" stroke-width="1"/><path d="M1 13l5.76 -5.88M15 13l-5.76 -5.88" fill="none" stroke="#f8d58a" stroke-width=".8"/></svg><svg style="left:240px;top:56px" width="15" height="15" viewBox="0 0 15 15"><path d="M1 .8l6.500 6.200-6.500 6.500z" fill="url(#gGrn)" stroke="#0b6b0b" stroke-width=".6"/><path d="M5 .8l9 6.200-9 6.500z" fill="url(#gGrn)" stroke="#0b6b0b" stroke-width=".6"/></svg><svg style="left:331px;top:57.5px" width="16" height="11" viewBox="0 0 16 11"><path d="M.8 5.500C3.500 1.200 12.500 1.200 15.200 5.500 12.500 9.800 3.500 9.800.8 5.500z" fill="#fff" stroke="#d48a1c" stroke-width="1.500"/><circle cx="8" cy="5.300" r="3.100" fill="#5a7fb5"/><circle cx="8" cy="5.300" r="1.800" fill="#1b1b2a"/><rect x="8.300" y="3.200" width="1.500" height="1.300" fill="#e8eef8"/></svg><svg style="left:418.5px;top:54.5px" width="15" height="17" viewBox="0 0 15 17"><path d="M3.700 6.500V5a3.700 3.400 0 0 1 7.400 0V6.500" fill="none" stroke="#ababab" stroke-width="2.100"/><rect x=".5" y="6.700" width="14" height="9.300" rx="1" fill="url(#gLock)" stroke="#d9901e" stroke-width="1"/><path d="M2.500 9.500h10M2.500 11.500h10M2.500 13.500h10" stroke="#fbeeb8" stroke-width=".9"/><rect x="6.4" y="9.300" width="2.200" height="3.700" fill="#8a5a14"/></svg><svg style="left:543.5px;top:54.5px" width="15" height="17" viewBox="0 0 15 17"><path d="M3.300 6.500V4.800a3.300 3.300 0 0 1 6.600-.2V5.300" fill="none" stroke="#ababab" stroke-width="2.100"/><rect x=".5" y="6.700" width="12" height="9.300" rx="1" fill="url(#gLock)" stroke="#d9901e" stroke-width="1"/><path d="M2.500 9.500h8M2.500 11.500h8M2.500 13.500h8" stroke="#fbeeb8" stroke-width=".9"/><rect x="5.4" y="9.300" width="2.200" height="3.700" fill="#8a5a14"/></svg><svg style="left:665.5px;top:54.5px" width="15" height="17" viewBox="0 0 15 17"><path d="M1 1h9l3.500 3.500v11.500h-12.500z" fill="#fdfdfd" stroke="#8f8f8f" stroke-width="1"/><path d="M2.500 3.500h6M2.500 5.500h9M2.500 7.500h9M2.500 9.500h9M2.500 11.500h9M2.500 13.500h9" stroke="#cfcfcf" stroke-width="1.100"/><path d="M3 5.500h3M3 9.500h4M8 7.500h3M3 13.500h5" stroke="#a9a9a9" stroke-width="1.100"/></svg><svg style="left:725.5px;top:54.5px" width="17" height="17" viewBox="0 0 17 17"><g transform="scale(1.0)"><path d="M1 1.200L8.500.600 16.300 9.300 9.800 16.300 1.200 8.300z" fill="url(#gTag)"/><path d="M1 1.200L8.500.600 16.300 9.300" fill="none" stroke="#5fdcf5" stroke-width=".7"/><circle cx="3.300" cy="3.200" r="1" fill="#e8f8ff"/></g></svg><svg style="left:785.5px;top:54px" width="13" height="17" viewBox="0 0 13 17"><circle cx="6.500" cy="3.300" r="2.300" fill="none" stroke="#bdbdbd" stroke-width="1"/><path d="M5.300 5.300L2.200 14.500M4.300 8.500l1.300 1.500M7.700 5.300l3 9.200M8.700 8.500L7.300 10" stroke="#b4b4b4" stroke-width="1.700" fill="none"/><path d="M6.500 5.600v5" stroke="#c8c8c8" stroke-width="1.300"/></svg><svg style="left:905px;top:55.5px" width="15.5" height="15.5" viewBox="0 0 15.5 15.5"><circle cx="7.700" cy="7.600" r="7.200" fill="url(#gOr)" stroke="#d9660f" stroke-width=".5"/><path d="M3.700 7.200a4 4 0 0 1 7-2.300" fill="none" stroke="#fff" stroke-width="1.900"/><path d="M12.400 2.800v3.600h-3.600z" fill="#fff"/><path d="M11.700 8a4 4 0 0 1-7 2.400" fill="none" stroke="#fff" stroke-width="1.900"/><path d="M3 12.500V8.900h3.600z" fill="#fff"/></svg><svg style="left:990px;top:56.5px" width="15" height="14" viewBox="0 0 15 14"><path d="M2 1.500C5 5 9 9 13 12.500" stroke="#c4061a" stroke-width="1.600" fill="none" stroke-linecap="round"/><path d="M12 1.200C9 5 5 9 1.500 12.500" stroke="#d60a22" stroke-width="1.600" fill="none" stroke-linecap="round"/></svg><svg style="left:26px;top:111px" width="17" height="17" viewBox="0 0 17 17"><path d="M1.300 9.500l7 5.800 3.700-4.800-6-2.500z" fill="#d3e6fb" stroke="#2b3778" stroke-width="1"/><circle cx="3.200" cy="5.200" r="2.700" fill="#fff" stroke="#4a4a4a" stroke-width=".9"/><path d="M3.200 3.600v1.800l1.300.5" stroke="#222" stroke-width=".8" fill="none"/><rect x="7.700" y="6" width="6.600" height="4.600" fill="#f4f6f8" stroke="#9a9a8a" stroke-width=".6"/><rect x="10.400" y="7.300" width="1.300" height="3.300" fill="#f2b81c"/><path d="M13 1.600l1.600-.6v2.600z" fill="#e8321c"/><path d="M6.300 6.600L11.500 1.400l4.700 5" fill="none" stroke="#f6c81e" stroke-width="1.700"/><path d="M7.300 6.200L11.500 2.600l3.700 3.500z" fill="#fffdf0"/></svg><svg style="left:47px;top:130.5px" width="15" height="17" viewBox="0 0 15 17"><path d="M.8 16c.2-4.300 2-6.300 4.500-7l1.700 1.600 1.700-1.600c2.700.7 4.700 2.700 4.900 7z" fill="#151515"/><path d="M5.600 9l1.400 2 1.400-2z" fill="#f4f4f4"/><path d="M6.500 10.200h1l.5 4.300-1 1.300-1-1.300z" fill="#d0161f"/><path d="M4.200 4.600c0-2 1-3 2.600-3s2.700 1 2.700 3.200c0 2.700-1.200 4.500-2.700 4.500s-2.600-1.900-2.600-4.700z" fill="#f7ad86"/><path d="M5 6.500c.5 1.600 1.200 2.400 1.900 2.400s1.500-.8 1.900-2.400c-.8.600-3 .6-3.800 0z" fill="#f9956a"/><path d="M3.800 5c-.5-3 .9-4.300 3-4.300 2.300 0 3.600 1.500 2.900 4.500-.2-1.600-.8-2.300-1.300-2.800-1.300.5-3 .5-3.900.6-.4.500-.6 1.100-.7 2z" fill="#2e2a28"/></svg><svg style="left:251px;top:816px" width="16" height="13.5" viewBox="0 0 16 13.5"><rect x=".5" y=".5" width="15" height="12.5" fill="url(#gEnv)" stroke="#9a9a9a" stroke-width="1"/><path d="M1 1l7.0 7.425000000000001 7.0 -7.425000000000001" fill="none" stroke="#fbe9b5" stroke-width="1"/><path d="M1 12.5l5.76 -5.67M15 12.5l-5.76 -5.67" fill="none" stroke="#f8d58a" stroke-width=".8"/></svg><svg style="left:274.5px;top:815.5px" width="15.5" height="15" viewBox="0 0 15.5 15"><path d="M1.500 6.500L8.500 1l6.500 5.500v7.500h-13.500z" fill="url(#gOpen)" stroke="#8a9bc4" stroke-width=".8"/><path d="M1.500 14l5.500-4.500h3l5 4.500" fill="#eef3fd" stroke="#8a9bc4" stroke-width=".7"/><path d="M3.300 7.500l5.200 3 4.800-3" fill="none" stroke="#e9b86a" stroke-width=".8"/><path d="M2.300 6.500V3a1.400 1.400 0 0 1 2.800 0v4.500" fill="none" stroke="#7d7d7d" stroke-width="1"/></svg><svg style="left:299px;top:815px" width="15" height="16.5" viewBox="0 0 15 16.5"><path d="M6.500 9.500L1.300 15.200" stroke="#2e4f93" stroke-width="2.200" stroke-linecap="round"/><circle cx="9.200" cy="5.700" r="4.400" fill="#e8f2ff" stroke="#3d7fd6" stroke-width="1.700"/><path d="M6.500 4.500a3 3 0 0 1 3-1.800" stroke="#fff" stroke-width="1" fill="none"/></svg><svg style="left:322.5px;top:815px" width="17" height="16" viewBox="0 0 17 16"><path d="M6.500 6.500l8.500 7.500" stroke="url(#gKey)" stroke-width="3" stroke-linecap="round"/><path d="M11 10.500l-1.800 2M13.200 12.500l-1.500 1.700" stroke="#e3a21e" stroke-width="1.500"/><circle cx="4.600" cy="4.500" r="3.900" fill="url(#gKey)" stroke="#d99a1c" stroke-width=".7"/><circle cx="3.500" cy="3.500" r="1.100" fill="#fdf1c4"/></svg><svg style="left:347px;top:818px" width="16" height="11" viewBox="0 0 16 11"><path d="M.8 5.500C3.500 1.200 12.500 1.200 15.200 5.500 12.500 9.800 3.500 9.800.8 5.500z" fill="#fff" stroke="#d48a1c" stroke-width="1.500"/><circle cx="8" cy="5.300" r="3.100" fill="#5a7fb5"/><circle cx="8" cy="5.300" r="1.800" fill="#1b1b2a"/><rect x="8.300" y="3.200" width="1.500" height="1.300" fill="#e8eef8"/></svg><svg style="left:370.5px;top:814.5px" width="17" height="17" viewBox="0 0 17 17"><g transform="scale(0.97)"><path d="M1 1.200L8.500.600 16.300 9.300 9.800 16.300 1.200 8.300z" fill="url(#gTag)"/><path d="M1 1.200L8.500.600 16.300 9.300" fill="none" stroke="#5fdcf5" stroke-width=".7"/><circle cx="3.300" cy="3.200" r="1" fill="#e8f8ff"/></g></svg><svg style="left:395.5px;top:814.5px" width="15.5" height="17" viewBox="0 0 15.5 17"><rect x="1.200" y="3.200" width="12.600" height="12.600" rx="1" fill="#cfdcef" stroke="#566a80" stroke-width="1.100"/><rect x="3.300" y="5.300" width="8.400" height="8.800" fill="#eef3fa" stroke="#7c8ea3" stroke-width=".6"/><path d="M5 1.200h5l.8 3.300h-6.600z" fill="#aebbd0" stroke="#566a80" stroke-width=".8"/><path d="M4.800 8h5.400M4.800 10h5.400M4.800 12h4" stroke="#a8b4c6" stroke-width=".8"/></svg><svg style="left:420px;top:816px" width="9" height="14" viewBox="0 0 9 14"><path d="M1 1.300l2.500 2.500-2.500 2.500M4.500 1.300l2.500 2.500-2.500 2.500" stroke="#111" stroke-width="1.300" fill="none"/><path d="M1.800 10.500h5l-2.500 2.500z" fill="#111"/></svg><svg style="left:673.5px;top:839px" width="21.5" height="17" viewBox="0 0 21.5 17"><path d="M6.500 3.500v-2h7.500v2" fill="none" stroke="#8a3c0c" stroke-width="1.300"/><rect x=".5" y="3" width="20.300" height="13" rx="1.500" fill="url(#gBag)"/><path d="M.5 9.500c5 2.500 15.300 2.500 20.300 0" fill="none" stroke="#7a2f08" stroke-width=".9"/><rect x="9.300" y="9.500" width="2.200" height="4" rx=".5" fill="#f4efe6"/></svg><svg style="left:1232.9px;top:842.3px" width="9" height="12" viewBox="0 0 9 12"><path d="M1.100 3.300V8a3 2.800 0 0 0 6 0V2.700a1.600 1.700 0 0 0-3.200 0V8.200" fill="none" stroke="#4a5868" stroke-width="1.15" stroke-linecap="round"/></svg><svg style="left:469.3px;top:143.3px" width="9" height="12" viewBox="0 0 9 12"><path d="M1.100 3.300V8a3 2.800 0 0 0 6 0V2.700a1.600 1.700 0 0 0-3.200 0V8.200" fill="none" stroke="#5a6470" stroke-width="1.1" stroke-linecap="round"/></svg><svg style="left:487px;top:140.5px" width="15" height="17" viewBox="0 0 15 17"><path d="M3.700 6.500V5a3.700 3.400 0 0 1 7.400 0V6.500" fill="none" stroke="#ababab" stroke-width="2.100"/><rect x=".5" y="6.700" width="14" height="9.300" rx="1" fill="url(#gLock)" stroke="#d9901e" stroke-width="1"/><path d="M2.500 9.500h10M2.500 11.500h10M2.500 13.500h10" stroke="#fbeeb8" stroke-width=".9"/><rect x="6.4" y="9.300" width="2.200" height="3.700" fill="#8a5a14"/></svg><svg style="left:449.5px;top:106px" width="21" height="22" viewBox="0 0 21 22"><g transform="scale(.972 1)"><path d="M.6 7.100L10.200.900 20.400 7.100V20.800H.6z" fill="url(#gBody)"/><path d="M1.100 7.300L10.200 1.400 19.900 7.300V11H1.100z" fill="url(#gFlap)"/><path d="M13 3.500L19.900 7.300V11H11z" fill="#f5a51e" opacity=".45"/><path d="M2.400 9.800h16.200v2.500c-4-2.300-12-2.300-16.200 0z" fill="#f4f5f9"/><path d="M1.100 20.300L7.600 13.300Q10.400 11.300 13.200 13.300L19.900 20.300z" fill="url(#gFold)" stroke="#98a4d6" stroke-width=".6"/><path d="M1.100 11.300l5 4M19.900 11.300l-5 4" stroke="#a7b2de" stroke-width=".6" fill="none"/><path d="M.6 7.100V20.800H20.400V7.100" fill="none" stroke="#5963ac" stroke-width="1.100"/><path d="M.6 7.100L10.200.900 20.400 7.100" fill="none" stroke="#a0a8d4" stroke-width=".8" stroke-dasharray="1.500 1"/></g></svg><svg style="left:468.7px;top:685px" width="9" height="12" viewBox="0 0 9 12"><path d="M1.100 3.300V8a3 2.800 0 0 0 6 0V2.700a1.600 1.700 0 0 0-3.200 0V8.200" fill="none" stroke="#8a93a6" stroke-width="1.2" stroke-linecap="round"/></svg>
</body></html>
